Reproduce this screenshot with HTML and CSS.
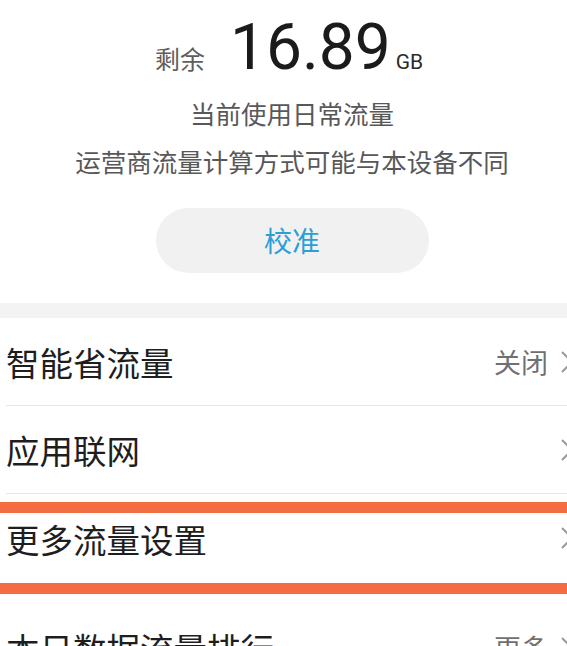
FILE: index.html
```html
<!DOCTYPE html>
<html lang="zh-CN">
<head>
<meta charset="utf-8">
<link rel="stylesheet" href="styles.css">
</head>
<body>
<div class="page">
  <section class="top">
    <div class="summary">
      <span class="label">剩余</span>
      <span class="amount">16.89</span>
      <span class="unit">GB</span>
    </div>
    <div class="note">当前使用日常流量</div>
    <div class="note">运营商流量计算方式可能与本设备不同</div>
    <div class="calib">校准</div>
  </section>
  <div class="band"></div>
  <ul class="list">
    <li class="row"><span class="title">智能省流量</span><span class="value">关闭</span><svg class="chev" viewBox="0 0 12 22"><path d="M1 1 L11 11 L1 21" fill="none" stroke="#9a9a9a" stroke-width="2"/></svg></li>
    <li class="row"><span class="title">应用联网</span><svg class="chev" viewBox="0 0 12 22"><path d="M1 1 L11 11 L1 21" fill="none" stroke="#9a9a9a" stroke-width="2"/></svg></li>
    <li class="row no-line"><span class="title">更多流量设置</span><svg class="chev" viewBox="0 0 12 22"><path d="M1 1 L11 11 L1 21" fill="none" stroke="#9a9a9a" stroke-width="2"/></svg></li>
    <li class="row last"><span class="title">本日数据流量排行</span><span class="value">更多</span><svg class="chev" viewBox="0 0 12 22"><path d="M1 1 L11 11 L1 21" fill="none" stroke="#9a9a9a" stroke-width="2"/></svg></li>
  </ul>
  <div class="highlight"></div>
</div>
</body>
</html>
```
FILE: styles.css
```css
html, body {
  margin: 0;
  padding: 0;
  background: #ffffff;
}
body {
  font-family: "Noto Sans CJK SC", "Noto Sans", sans-serif;
  width: 567px;
  height: 646px;
  overflow: hidden;
}
.page {
  position: relative;
  width: 567px;
  height: 646px;
  overflow: hidden;
}
.top {
  height: 303px;
  box-sizing: border-box;
  padding-left: 17px;
  display: flex;
  flex-direction: column;
  align-items: center;
}
.summary {
  margin-top: 16px;
  margin-right: 6px;
  height: 64px;
  display: flex;
  align-items: baseline;
  line-height: 64px;
}
.label {
  font-size: 25px;
  color: #5e5e5e;
  margin-right: 25px;
}
.amount {
  font-family: Roboto, "Noto Sans", sans-serif;
  font-size: 64px;
  color: #1b1b1b;
}
.unit {
  font-family: Roboto, "Noto Sans", sans-serif;
  font-size: 21px;
  color: #2a2a2a;
  margin-left: 5px;
}
.note {
  font-size: 25.5px;
  line-height: 48px;
  color: #585858;
}
.summary + .note {
  margin-top: 9px;
}
.calib {
  margin-top: 23px;
  width: 273px;
  height: 65px;
  border-radius: 33px;
  background: #f1f1f1;
  color: #2a9fd6;
  font-size: 28px;
  line-height: 65px;
  text-align: center;
}
.band {
  height: 15px;
  background: #f3f3f3;
}
.list {
  list-style: none;
  margin: 0;
  padding: 0 0 0 6px;
}
.row {
  height: 87px;
  border-bottom: 1px solid #e6e6e6;
  display: flex;
  align-items: center;
}
.row.no-line {
  border-bottom: none;
  height: 88px;
}
.row.last {
  border-bottom: none;
  margin-top: 22px;
}
.title {
  font-size: 33.5px;
  color: #1e1e1e;
  flex: 1;
}
.value {
  font-size: 27px;
  color: #707070;
  margin-right: 13px;
}
.chev {
  width: 12px;
  height: 22px;
  margin-right: -6px;
  flex: none;
}
.highlight {
  position: absolute;
  left: -20px;
  right: -20px;
  top: 502px;
  height: 92px;
  box-sizing: border-box;
  border: 11px solid #f46c42;
}
```
